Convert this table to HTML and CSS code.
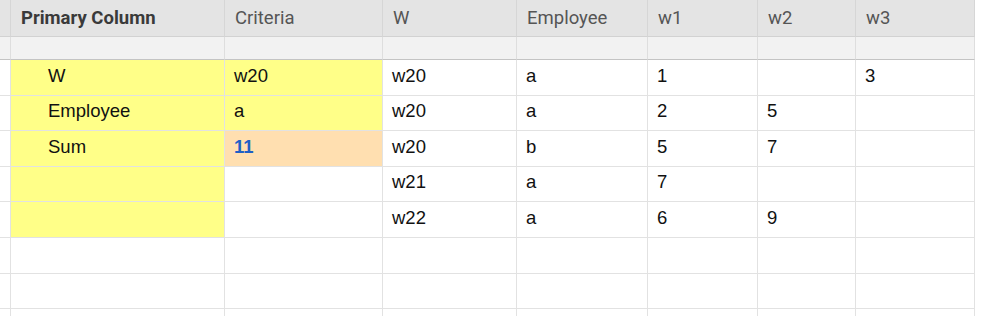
FILE: index.html
```html
<!DOCTYPE html>
<html>
<head>
<meta charset="utf-8">
<link rel="stylesheet" href="styles.css">
</head>
<body>
<div class="sheet">
  <div class="c hd stub"></div>
  <div class="c hd primary">Primary Column</div>
  <div class="c hd">Criteria</div>
  <div class="c hd">W</div>
  <div class="c hd">Employee</div>
  <div class="c hd">w1</div>
  <div class="c hd">w2</div>
  <div class="c hd">w3</div>

  <div class="c sub stub"></div>
  <div class="c sub"></div>
  <div class="c sub"></div>
  <div class="c sub"></div>
  <div class="c sub"></div>
  <div class="c sub"></div>
  <div class="c sub"></div>
  <div class="c sub"></div>

  <div class="c stub"></div>
  <div class="c yel ind">W</div>
  <div class="c yel">w20</div>
  <div class="c">w20</div>
  <div class="c">a</div>
  <div class="c">1</div>
  <div class="c"></div>
  <div class="c">3</div>

  <div class="c stub"></div>
  <div class="c yel ind">Employee</div>
  <div class="c yel">a</div>
  <div class="c">w20</div>
  <div class="c">a</div>
  <div class="c">2</div>
  <div class="c">5</div>
  <div class="c"></div>

  <div class="c stub"></div>
  <div class="c yel ind">Sum</div>
  <div class="c peach result">11</div>
  <div class="c">w20</div>
  <div class="c">b</div>
  <div class="c">5</div>
  <div class="c">7</div>
  <div class="c"></div>

  <div class="c stub"></div>
  <div class="c yel"></div>
  <div class="c"></div>
  <div class="c">w21</div>
  <div class="c">a</div>
  <div class="c">7</div>
  <div class="c"></div>
  <div class="c"></div>

  <div class="c stub"></div>
  <div class="c yel"></div>
  <div class="c"></div>
  <div class="c">w22</div>
  <div class="c">a</div>
  <div class="c">6</div>
  <div class="c">9</div>
  <div class="c"></div>

  <div class="c stub"></div>
  <div class="c"></div>
  <div class="c"></div>
  <div class="c"></div>
  <div class="c"></div>
  <div class="c"></div>
  <div class="c"></div>
  <div class="c"></div>

  <div class="c stub"></div>
  <div class="c"></div>
  <div class="c"></div>
  <div class="c"></div>
  <div class="c"></div>
  <div class="c"></div>
  <div class="c"></div>
  <div class="c"></div>

  <div class="c stub last"></div>
  <div class="c last"></div>
  <div class="c last"></div>
  <div class="c last"></div>
  <div class="c last"></div>
  <div class="c last"></div>
  <div class="c last"></div>
  <div class="c last"></div>
</div>
</body>
</html>
```

FILE: styles.css
```css
html, body {
  margin: 0;
  padding: 0;
  background: #ffffff;
  overflow: hidden;
}

.sheet {
  display: grid;
  grid-template-columns: 11px 214px 158px 134px 131px 110px 98px 119px;
  grid-template-rows: 37px 23px 36px 35px 36px 35px 36px 36px 35px 7px;
  width: 975px;
  font-family: "Liberation Sans", Arial, sans-serif;
  font-size: 18.5px;
  color: #111111;
}

.c {
  box-sizing: border-box;
  border-right: 1px solid #e2e2e2;
  border-bottom: 1px solid #e2e2e2;
  display: flex;
  align-items: center;
  padding: 0 0 4px 9px;
  white-space: nowrap;
  overflow: hidden;
}

.c.last {
  border-bottom: none;
}

.hd {
  background: #e4e4e4;
  border-right-color: #d6d6d6;
  border-bottom-color: #d2d2d2;
  font-family: Roboto, "Liberation Sans", sans-serif;
  color: #555555;
  padding: 0 0 1px 10px;
}

.hd.primary {
  font-weight: 700;
  color: #3a3a3a;
}

.sub {
  background: #f2f2f2;
  border-bottom-color: #c4c4c4;
  border-right-color: #dedede;
}

.stub {
  padding: 0;
}

.yel {
  background: #ffff88;
}

.ind {
  padding-left: 37px;
}

.peach {
  background: #ffdfb0;
}

.result {
  font-weight: 700;
  color: #1f5fc6;
}
```
